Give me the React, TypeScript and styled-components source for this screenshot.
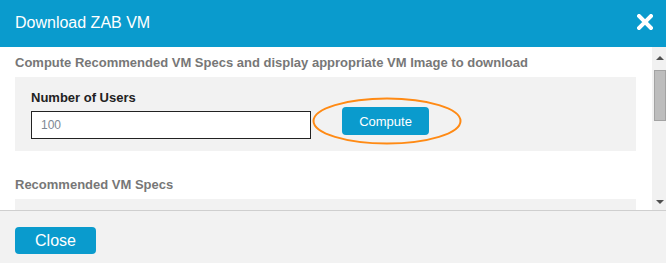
import React from "react";
import styled, { createGlobalStyle } from "styled-components";

const GlobalStyle = createGlobalStyle`
  html, body {
    margin: 0;
    padding: 0;
    background: #fff;
  }
  body {
    font-family: "Liberation Sans", Arial, sans-serif;
  }
`;

/* Styles */
const Modal = styled.div`
  width: 666px;
  height: 263px;
  display: flex;
  flex-direction: column;
  overflow: hidden;
`;

const Header = styled.header`
  height: 47px;
  flex: none;
  background: #0a9bcd;
  display: flex;
  align-items: center;
  justify-content: space-between;
  padding: 0 13px 0 15px;
  box-sizing: border-box;
`;

const Title = styled.h2`
  margin: 0;
  font-size: 16px;
  font-weight: normal;
  color: #fff;
  padding-bottom: 2px;
`;

const CloseIcon = styled.button`
  border: 0;
  background: none;
  padding: 0;
  width: 16px;
  height: 16px;
  margin-bottom: 4px;
  display: flex;
  cursor: pointer;
`;

const Body = styled.div`
  height: 163px;
  flex: none;
  display: flex;
  background: #fff;
`;

const Content = styled.div`
  flex: 1;
  overflow: hidden;
  padding: 0 16px 0 15px;
`;

const SectionTitle = styled.h4<{ $top: number }>`
  margin: ${(p) => p.$top}px 0 0;
  font-size: 13px;
  line-height: 15px;
  font-weight: bold;
  color: #777;
`;

const Panel = styled.div<{ $top: number }>`
  background: #f2f2f2;
  margin-top: ${(p) => p.$top}px;
  padding: 13px 16px 12px;
`;

const Label = styled.label`
  display: block;
  font-size: 13px;
  line-height: 15px;
  font-weight: bold;
  color: #222;
`;

const Row = styled.div`
  display: flex;
  align-items: flex-start;
  margin-top: 6px;
`;

const Input = styled.input`
  width: 280px;
  height: 28px;
  box-sizing: border-box;
  border: 1px solid #222;
  background: #fff;
  padding: 0 9px;
  font-family: inherit;
  font-size: 12px;
  color: #7d8894;
  outline: none;
`;

const Highlight = styled.div`
  position: relative;
  margin: -4px 0 0 31px;
`;

const Ring = styled.svg`
  position: absolute;
  left: -30px;
  top: -10px;
  pointer-events: none;
`;

const Button = styled.button<{ $size: number; $w: number; $h: number }>`
  width: ${(p) => p.$w}px;
  height: ${(p) => p.$h}px;
  border: 0;
  border-radius: 4px;
  background: #0a9bcd;
  color: #fff;
  font-family: inherit;
  font-size: ${(p) => p.$size}px;
  padding: 0;
  cursor: pointer;
`;

const Scrollbar = styled.div`
  width: 14px;
  flex: none;
  background: #f1f1f1;
  display: flex;
  flex-direction: column;
`;

const ArrowButton = styled.div<{ $down?: boolean }>`
  height: 17px;
  display: flex;
  align-items: center;
  justify-content: center;
  padding-left: 1px;
  &::after {
    content: "";
    width: 0;
    height: 0;
    border-left: 4px solid transparent;
    border-right: 4px solid transparent;
    ${(p) =>
      p.$down
        ? "border-top: 4px solid #505050; margin-top: 0px;"
        : "border-bottom: 4px solid #505050; margin-top: 4px;"}
  }
`;

const Track = styled.div`
  flex: 1;
`;

const Thumb = styled.div`
  margin: 6px 0 0 2px;
  height: 51px;
  background: #bdbdbd;
  border: 1px solid #a3a3a3;
  box-sizing: border-box;
`;

const Footer = styled.footer`
  flex: 1;
  background: #f2f2f2;
  border-top: 1px solid #cfcfcf;
  padding: 16px 15px 0;
`;

const App = () => {
  return (
    <>
      <GlobalStyle />
      <Modal>
        <Header>
          <Title>Download ZAB VM</Title>
          <CloseIcon aria-label="Close">
            <svg width="16" height="16" viewBox="0 0 16 16">
              <path d="M2 2 L14 14 M14 2 L2 14" stroke="#fff" strokeWidth="4" strokeLinecap="square" fill="none" />
            </svg>
          </CloseIcon>
        </Header>
        <Body>
          <Content>
            <SectionTitle $top={8}>
              Compute Recommended VM Specs and display appropriate VM Image to download
            </SectionTitle>
            <Panel $top={7}>
              <Label>Number of Users</Label>
              <Row>
                <Input defaultValue="100" />
                <Highlight>
                  <Ring width="150" height="48" viewBox="0 0 150 48">
                    <ellipse cx="75" cy="24" rx="73.5" ry="22.5" fill="none" stroke="#ff8a14" strokeWidth="2" />
                  </Ring>
                  <Button $size={13} $w={87} $h={28}>Compute</Button>
                </Highlight>
              </Row>
            </Panel>
            <SectionTitle $top={26}>Recommended VM Specs</SectionTitle>
            <Panel $top={7} style={{ height: 40 }} />
          </Content>
          <Scrollbar>
            <ArrowButton />
            <Track>
              <Thumb />
            </Track>
            <ArrowButton $down />
          </Scrollbar>
        </Body>
        <Footer>
          <Button $size={16} $w={81} $h={27}>Close</Button>
        </Footer>
      </Modal>
    </>
  );
};

export default App;
